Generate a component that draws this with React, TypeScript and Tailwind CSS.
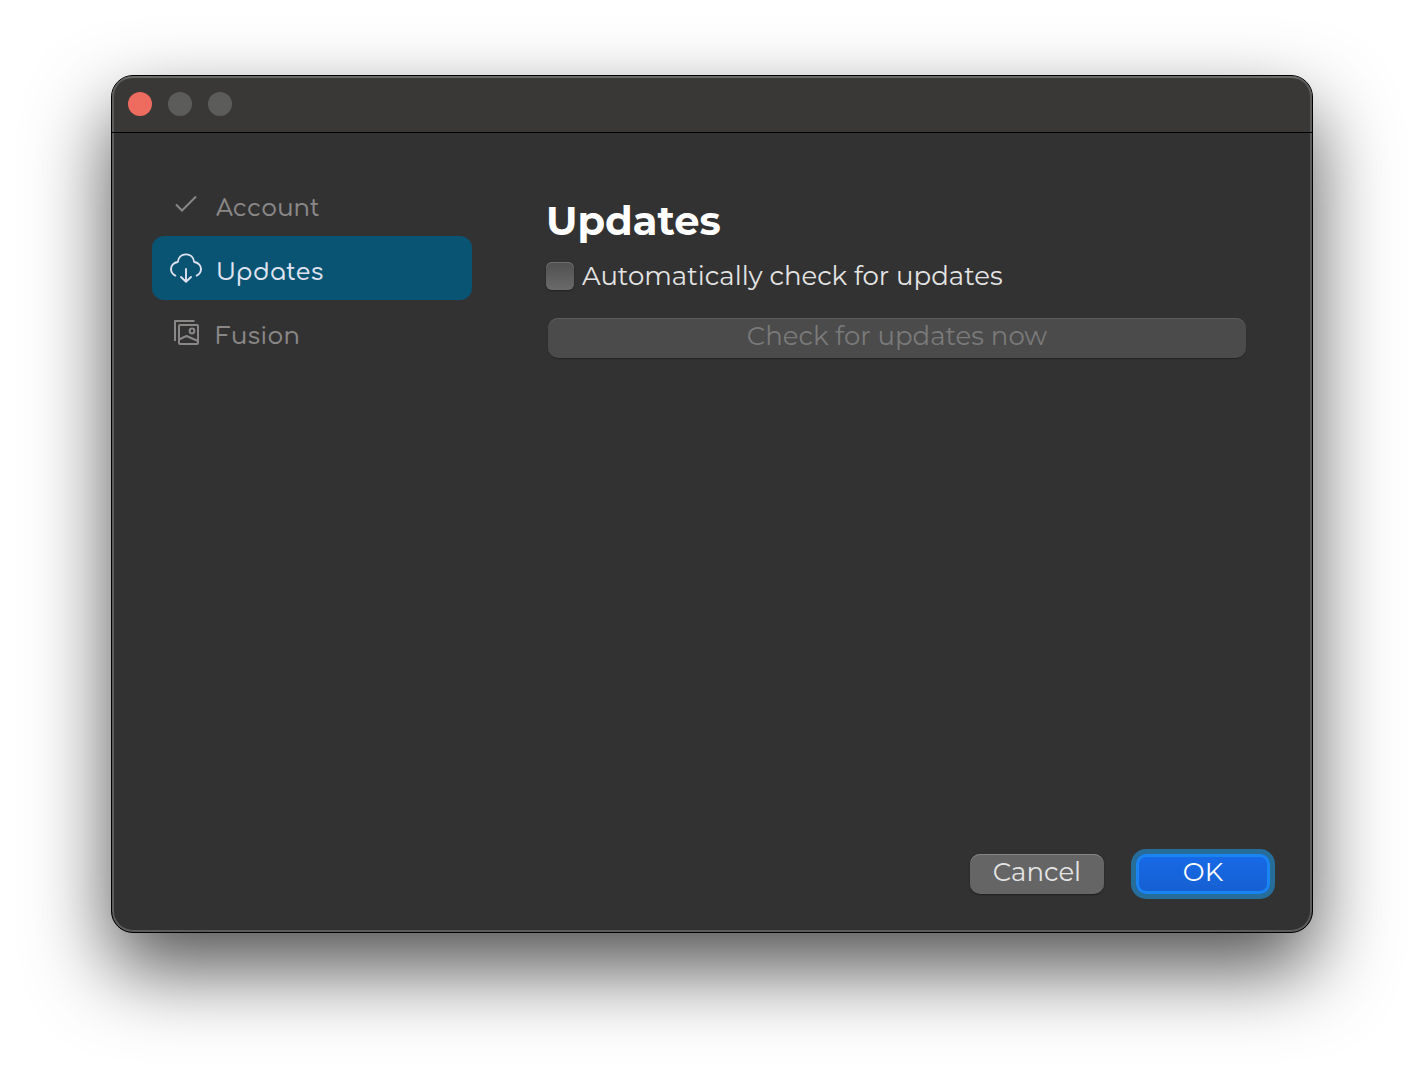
import { useState } from "react";
import type { ReactNode } from "react";

function CheckIcon() {
  return (
    <svg width="32" height="32" viewBox="0 0 32 32" fill="none" stroke="currentColor" strokeWidth="2" aria-hidden="true">
      <path d="M6 15.5 L12 21.5 L26 7.5" />
    </svg>
  );
}

function CloudIcon() {
  return (
    <svg width="32" height="32" viewBox="0 0 32 32" fill="none" stroke="currentColor" strokeWidth="1.9" strokeLinecap="round" strokeLinejoin="round" aria-hidden="true">
      <path d="M5.3 22.6 C2.6 21.3 1 19 1 16 C1 12.4 3.8 9.4 7.8 9 C8.3 4.4 11.6 1.4 16 1.4 C20.4 1.4 23.7 4.4 24.2 9 C28.2 9.4 31 12.4 31 16 C31 19 29.4 21.3 26.7 22.6" />
      <path d="M16 16 V28.5 M11 24 L16 28.8 L21 24" />
    </svg>
  );
}

function GalleryIcon() {
  return (
    <svg width="32" height="32" viewBox="0 0 32 32" fill="none" stroke="currentColor" strokeWidth="2" strokeLinejoin="round" aria-hidden="true">
      <path d="M5 24 V4 H24.5" />
      <rect x="9" y="8" width="19" height="19" rx="1" />
      <path d="M9 22.5 L16.5 19 L28 24" />
      <circle cx="22" cy="14" r="2.4" />
    </svg>
  );
}

const sections: { name: string; icon: ReactNode }[] = [
  { name: "Account", icon: <CheckIcon /> },
  { name: "Updates", icon: <CloudIcon /> },
  { name: "Fusion", icon: <GalleryIcon /> },
];

export default function App() {
  const [active, setActive] = useState("Updates");
  const [auto, setAuto] = useState(false);

  return (
    <div className="flex min-h-screen flex-col bg-white px-[111px] pt-[75px] pb-[147px] font-[Montserrat,Inter,sans-serif]">
      <div className="flex flex-1 flex-col rounded-[22px] border border-black bg-[#323232] shadow-[0_36px_80px_rgba(0,0,0,0.68),inset_0_0_0_2px_#5c5c5c]">
        <header className="flex h-[57px] items-center gap-4 rounded-t-[21px] border-b border-black bg-[#393836] px-4 shadow-[inset_2px_0_0_#5c5c5c,inset_-2px_0_0_#5c5c5c,inset_0_2px_0_#6a6a68]">
          <button type="button" aria-label="Close" className="size-6 rounded-full bg-[#ed6b5f]" />
          <button type="button" aria-label="Minimize" disabled className="size-6 rounded-full bg-[#5c5c5a]" />
          <button type="button" aria-label="Zoom" disabled className="size-6 rounded-full bg-[#5c5c5a]" />
        </header>
        <div className="flex flex-1 gap-[74px] pt-[39px] pr-[66px] pl-10">
          <nav className="flex w-80 shrink-0 flex-col font-[Comfortaa,Quicksand,Montserrat,sans-serif]">
            {sections.map(({ name, icon }) => (
              <button
                key={name}
                type="button"
                onClick={() => setActive(name)}
                className={
                  "flex h-16 items-center gap-[14px] rounded-xl px-[18px] pt-0.5 text-left text-2xl font-medium " +
                  (name === active ? "bg-[#0a5473] text-[#dfe3f0]" : "text-[#8a8787]")
                }
              >
                {icon}
                <span className="pt-2">{name}</span>
              </button>
            ))}
          </nav>
          <main className="flex min-w-0 flex-1 flex-col pt-6">
            <h1 className="text-[40px] leading-[50px] font-bold text-white">Updates</h1>
            <label className="mt-3 flex h-9 items-center gap-2 text-[26px] text-[#e4e4e4]">
              <input
                type="checkbox"
                checked={auto}
                onChange={(e) => setAuto(e.target.checked)}
                className="size-7 shrink-0 appearance-none rounded-md bg-linear-to-b from-[#505050] to-[#6a6a6a] shadow-[0_1px_2px_rgba(0,0,0,0.35),inset_0_1px_0_#707070] checked:from-[#186ae8] checked:to-[#155fd0]"
              />
              Automatically check for updates
            </label>
            <button
              type="button"
              disabled
              className="mt-6 ml-0.5 h-10 rounded-[10px] bg-[#4b4b4b] pb-1 text-[26px] leading-9 text-[#7a7a7a] shadow-[0_1px_1px_rgba(0,0,0,0.3),inset_0_1px_0_#5c5c5c]"
            >
              Check for updates now
            </button>
          </main>
        </div>
        <footer className="flex justify-end gap-8 pr-[42px] pb-[38px]">
          <button
            type="button"
            className="h-10 w-[134px] rounded-[10px] bg-[#656565] pb-1 text-[26px] leading-9 text-[#e4e4e4] shadow-[0_1px_2px_rgba(0,0,0,0.4),inset_0_1px_0_#858585]"
          >
            Cancel
          </button>
          <button
            type="button"
            className="h-10 w-[134px] rounded-[10px] bg-linear-to-b from-[#186ae8] to-[#155fd0] pb-1 text-[26px] leading-9 text-white shadow-[0_0_0_5px_#266d9a,inset_0_0_0_3px_#1a84f0]"
          >
            OK
          </button>
        </footer>
      </div>
    </div>
  );
}
